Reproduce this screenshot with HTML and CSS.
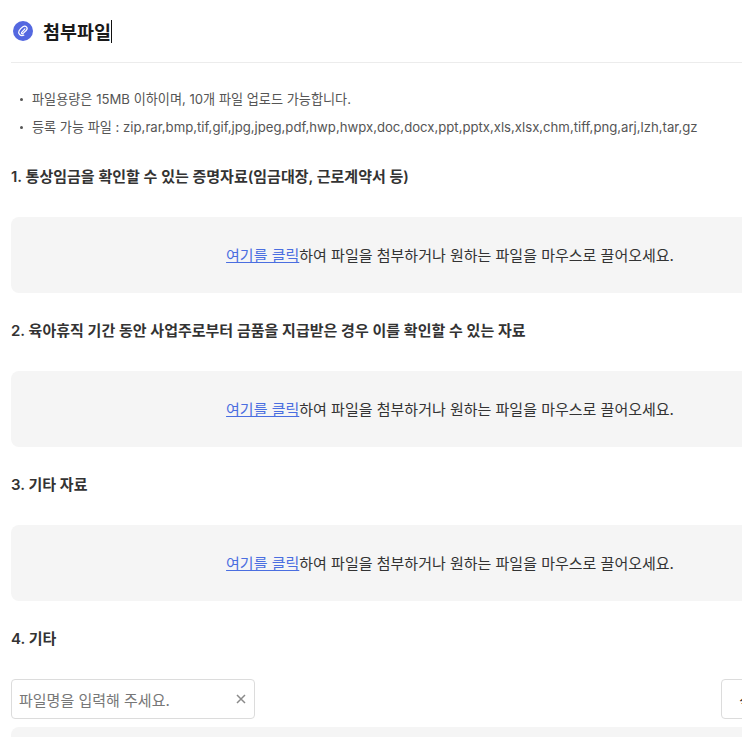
FILE: index.html
```html
<!DOCTYPE html>
<html lang="ko">
<head>
    <meta charset="UTF-8">
    <meta name="viewport" content="width=device-width, initial-scale=1.0">
    <title>첨부파일</title>
    <link rel="stylesheet" href="styles.css">
</head>
<body>
    <div class="page">
        <div class="title-row">
            <svg class="clip-icon" width="20" height="20" viewBox="0 0 20 20">
                <circle cx="10" cy="10" r="10" fill="#5468e0"/>
                <path d="M11.9 7.9 L8.7 11.4 C8 12.4 9 13.2 9.9 12.6 L13.4 9.2 C15.4 6.8 12.6 3.9 9.9 5.7 C8.4 6.7 7 8.1 6.1 9.7 C4.6 12.6 7.4 15.6 10.8 14.2" fill="none" stroke="#fff" stroke-width="1.25" stroke-linecap="round"/>
            </svg>
            <h2 class="title">첨부파일</h2><span class="caret"></span>
        </div>

        <ul class="notice">
            <li>파일용량은 15MB 이하이며, 10개 파일 업로드 가능합니다.</li>
            <li>등록 가능 파일 : zip,rar,bmp,tif,gif,jpg,jpeg,pdf,hwp,hwpx,doc,docx,ppt,pptx,xls,xlsx,chm,tiff,png,arj,lzh,tar,gz</li>
        </ul>

        <h3 class="section-title">1. 통상임금을 확인할 수 있는 증명자료(임금대장, 근로계약서 등)</h3>
        <div class="dropzone"><a href="#">여기를 클릭</a>하여 파일을 첨부하거나 원하는 파일을 마우스로 끌어오세요.</div>

        <h3 class="section-title">2. 육아휴직 기간 동안 사업주로부터 금품을 지급받은 경우 이를 확인할 수 있는 자료</h3>
        <div class="dropzone"><a href="#">여기를 클릭</a>하여 파일을 첨부하거나 원하는 파일을 마우스로 끌어오세요.</div>

        <h3 class="section-title">3. 기타 자료</h3>
        <div class="dropzone"><a href="#">여기를 클릭</a>하여 파일을 첨부하거나 원하는 파일을 마우스로 끌어오세요.</div>

        <h3 class="section-title">4. 기타</h3>
        <div class="file-row">
            <div class="file-input">
                <span class="placeholder">파일명을 입력해 주세요.</span>
                <svg width="10" height="10" viewBox="0 0 10 10">
                    <path d="M1 1 L9 9 M9 1 L1 9" stroke="#8a8a8a" stroke-width="1.5"/>
                </svg>
            </div>
            <button class="add-button">삭제</button>
        </div>
        <div class="dropzone last"></div>
    </div>
</body>
</html>
```

FILE: styles.css
```css
html, body {
    margin: 0;
    height: 737px;
    overflow: hidden;
    background-color: #fff;
}
body {
    font-family: Inter, "Noto Sans CJK KR", sans-serif;
    color: #333;
}
.page {
    width: 878px;
    margin-left: 11px;
}
.title-row {
    display: flex;
    align-items: center;
    height: 62px;
    border-bottom: 1px solid #ececec;
    padding-left: 2px;
}
.clip-icon {
    margin-right: 10px;
}
.title {
    margin: 0;
    font-size: 18.5px;
    font-weight: 600;
    color: #1a1a1a;
}
.caret {
    width: 1px;
    height: 23px;
    background-color: #111;
}
.notice {
    list-style: none;
    margin: 0;
    padding: 22px 0 0 21px;
    font-size: 13.15px;
    line-height: 28px;
    color: #555;
}
.notice li {
    position: relative;
}
.notice li::before {
    content: "";
    position: absolute;
    left: -12px;
    top: 13px;
    width: 3px;
    height: 3px;
    border-radius: 50%;
    background-color: #555;
}
.section-title {
    margin: 0;
    font-size: 15px;
    font-weight: 600;
    line-height: 22px;
    color: #333;
}
.notice + .section-title {
    margin-top: 25px;
}
.dropzone + .section-title {
    margin-top: 27px;
}
.dropzone {
    margin-top: 29px;
    height: 76px;
    line-height: 77px;
    border-radius: 8px;
    background-color: #f5f5f5;
    text-align: center;
    font-size: 15px;
    color: #333;
}
.dropzone a {
    color: #4a6ee0;
}
.file-row {
    display: flex;
    gap: 466px;
    margin-top: 29px;
}
.file-input {
    display: flex;
    align-items: center;
    justify-content: space-between;
    box-sizing: border-box;
    width: 244px;
    height: 40px;
    padding: 0 8px 0 7px;
    border: 1px solid #dcdcdc;
    border-radius: 4px;
}
.placeholder {
    font-size: 15px;
    color: #777;
}
.add-button {
    box-sizing: border-box;
    width: 64px;
    height: 40px;
    border: 1px solid #dcdcdc;
    border-radius: 4px;
    background-color: #fff;
    font-family: inherit;
    font-size: 15px;
    color: #333;
}
.dropzone.last {
    margin-top: 8px;
}
```
